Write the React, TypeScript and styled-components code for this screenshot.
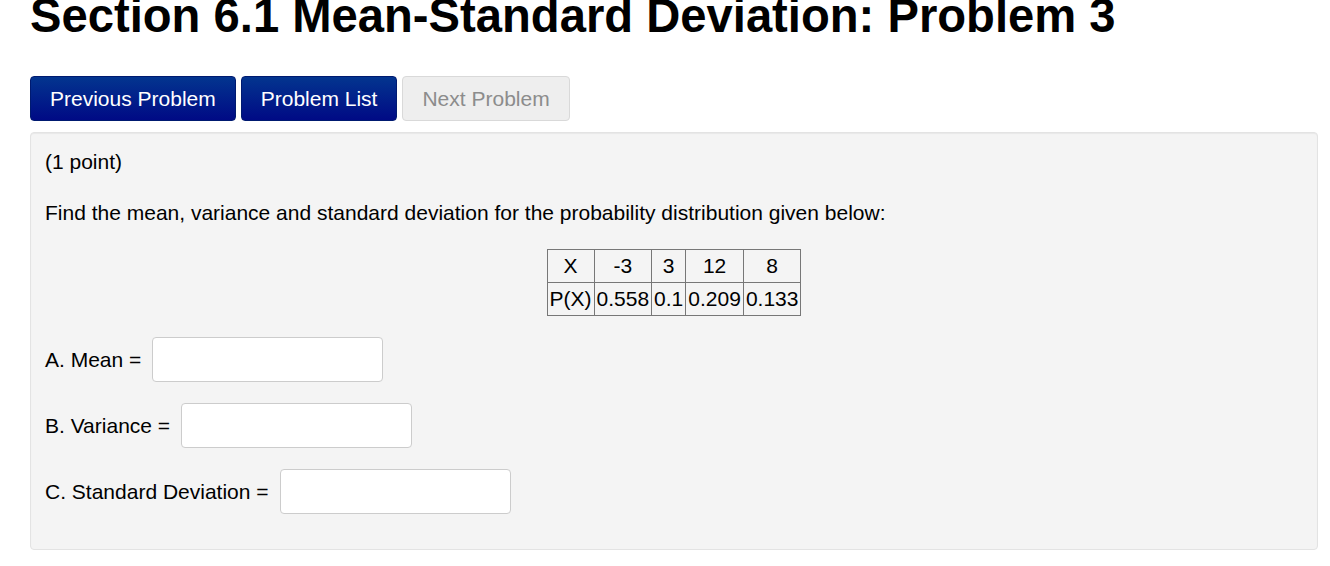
import styled, { createGlobalStyle } from 'styled-components'

const GlobalStyle = createGlobalStyle`
  html, body {
    margin: 0;
    padding: 0;
    background: #fff;
    font-family: "Liberation Sans", Arial, sans-serif;
    color: #000;
  }
`

const Page = styled.div`
  padding: 0 12px 0 30px;
`

const Title = styled.h1`
  font-size: 47.2px;
  font-weight: bold;
  line-height: 1;
  margin: -8px 0 0 0;
`

const NavBar = styled.div`
  display: flex;
  gap: 5px;
  margin-top: 37px;
`

const NavButton = styled.button<{ $disabled?: boolean }>`
  height: 45px;
  padding: 0 19px;
  font-family: inherit;
  font-size: 21px;
  border-radius: 4px;
  cursor: ${p => (p.$disabled ? 'default' : 'pointer')};
  color: ${p => (p.$disabled ? '#8c8c8c' : '#fff')};
  border: 1px solid ${p => (p.$disabled ? '#d9d9d9' : '#001a70')};
  background: ${p =>
    p.$disabled ? '#eeeeee' : 'linear-gradient(to bottom, #03358f 0%, #000a85 100%)'};
`

const Well = styled.div`
  margin-top: 11px;
  background: #f4f4f4;
  border: 1px solid #e3e3e3;
  border-radius: 4px;
  padding: 14px 14px 35px;
  box-shadow: inset 0 1px 1px rgba(0, 0, 0, 0.05);
  font-size: 21px;
  line-height: 30px;
`

const Para = styled.p`
  margin: 0 0 21px 0;
`

const DistTable = styled.table`
  border-collapse: collapse;
  margin: 0 auto 21px;
  font-size: 21px;
  background: #f4f4f4;
  border: 1px solid #333;
`

const Cell = styled.td`
  border: 1px solid #777;
  text-align: center;
  padding: 4px 2px;
  line-height: 24px;
  min-width: 20px;
`

const AnswerRow = styled.div`
  display: flex;
  align-items: center;
  gap: 11px;
  margin-bottom: 21px;
  &:last-child { margin-bottom: 0; }
`

const AnswerInput = styled.input`
  width: 231px;
  height: 45px;
  box-sizing: border-box;
  border: 1px solid #cccccc;
  border-radius: 4px;
  background: #fff;
  font-size: 18px;
  padding: 0 10px;
`

const xs = ['-3', '3', '12', '8']
const ps = ['0.558', '0.1', '0.209', '0.133']

const answers = ['A. Mean =', 'B. Variance =', 'C. Standard Deviation =']

export default function App() {
  return (
    <Page>
      <GlobalStyle />
      <Title>Section 6.1 Mean-Standard Deviation: Problem 3</Title>
      <NavBar>
        <NavButton>Previous Problem</NavButton>
        <NavButton>Problem List</NavButton>
        <NavButton $disabled>Next Problem</NavButton>
      </NavBar>
      <Well>
        <Para>(1 point)</Para>
        <Para>Find the mean, variance and standard deviation for the probability distribution given below:</Para>
        <DistTable>
          <tbody>
            <tr>
              <Cell>X</Cell>
              {xs.map(x => <Cell key={x}>{x}</Cell>)}
            </tr>
            <tr>
              <Cell>P(X)</Cell>
              {ps.map(p => <Cell key={p}>{p}</Cell>)}
            </tr>
          </tbody>
        </DistTable>
        {answers.map(a => (
          <AnswerRow key={a}>
            <span>{a}</span>
            <AnswerInput type="text" />
          </AnswerRow>
        ))}
      </Well>
    </Page>
  )
}
